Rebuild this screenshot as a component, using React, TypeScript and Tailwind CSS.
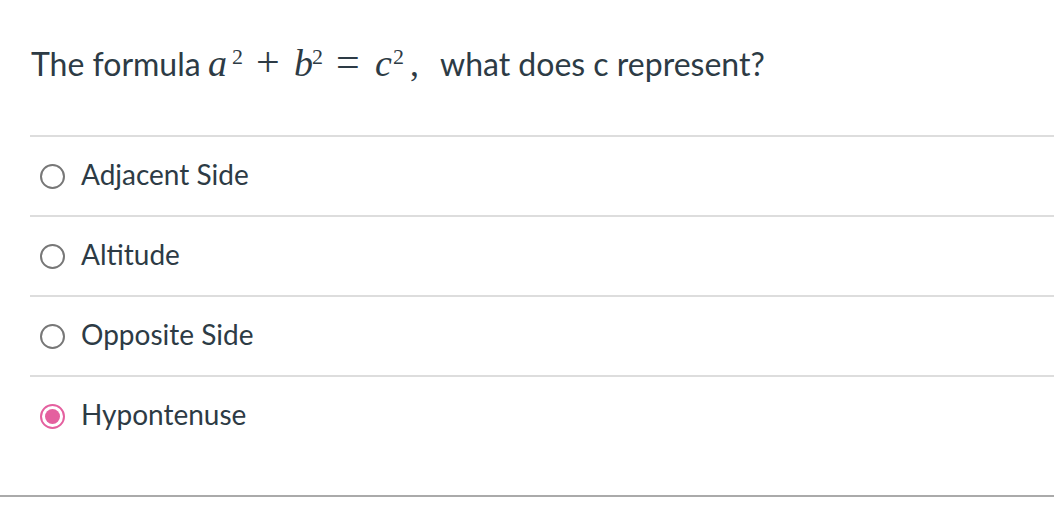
import React from "react";

const options = [
  { label: "Adjacent Side", checked: false },
  { label: "Altitude", checked: false },
  { label: "Opposite Side", checked: false },
  { label: "Hypontenuse", checked: true },
];

function Radio({ checked }: { checked: boolean }) {
  if (checked) {
    return (
      <span className="flex h-[25px] w-[25px] shrink-0 items-center justify-center rounded-full border-2 border-[#e4609f] bg-white">
        <span className="h-[15px] w-[15px] rounded-full bg-[#e4609f]" />
      </span>
    );
  }
  return <span className="h-[25px] w-[25px] shrink-0 rounded-full border-2 border-[#777777] bg-white" />;
}

function Sup({ w }: { w: string }) {
  return <span className={`relative top-[-12px] inline-block text-[22px] leading-none ${w}`}>2</span>;
}

export default function App() {
  return (
    <div className="relative h-[510px] w-[1054px] overflow-hidden bg-white text-[#2d3b45] [font-family:Lato,'Noto_Sans',sans-serif]">
      <div className="pl-[30px]">
        <div className="h-[135px] pt-[42px] pl-[1px]">
          <p className="flex items-baseline whitespace-nowrap text-[32px] leading-[40px]">
            <span className="w-[177px] shrink-0">The formula</span>
            <span className="flex items-baseline leading-[40px] [font-family:'Liberation_Serif',serif]">
              <span className="inline-block w-[24px] text-[38px] italic">a</span>
              <Sup w="w-[24px]" />
              <span className="inline-block w-[38px] text-[42px]">+</span>
              <span className="inline-block w-[18px] text-[38px] italic">b</span>
              <Sup w="w-[24px]" />
              <span className="inline-block w-[39px] text-[42px]">=</span>
              <span className="inline-block w-[18px] text-[38px] italic">c</span>
              <Sup w="w-[17px]" />
              <span className="inline-block w-[30px] text-[36px]">,</span>
            </span>
            <span>what does c represent?</span>
          </p>
        </div>
        {options.map((o) => (
          <div key={o.label} className="flex h-[80px] items-center border-t-2 border-[#dddddd] pl-[10px]">
            <Radio checked={o.checked} />
            <span className="mb-[5px] ml-[16px] text-[28px] leading-[34px]">{o.label}</span>
          </div>
        ))}
      </div>
      <div className="mt-[40px] h-[2px] w-full bg-[#aaaaaa]" />
    </div>
  );
}
